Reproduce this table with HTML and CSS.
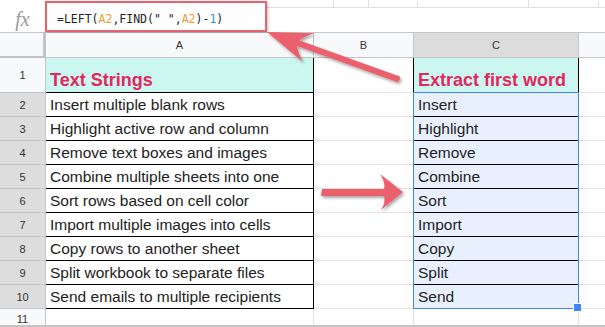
FILE: index.html
```html
<!DOCTYPE html>
<html>
<head>
<meta charset="utf-8">
<link rel="stylesheet" href="styles.css">
</head>
<body>
<div class="page">
  <div class="formula-row">
    <div class="fx">fx</div>
    <div class="formula">=LEFT(<span class="ref">A2</span>,FIND(" ",<span class="ref">A2</span>)-<span class="num">1</span>)</div>
  </div>
  <div class="sheet">
    <div class="corner"></div>
    <div class="colhead">A</div>
    <div class="colhead">B</div>
    <div class="colhead sel">C</div>
    <div class="colhead last"></div>

    <div class="rowhead">1</div>
    <div class="cell a title">Text Strings</div>
    <div class="cell b b1"></div>
    <div class="cell c title">Extract first word</div>
    <div class="cell d"></div>

    <div class="rowhead sel">2</div>
    <div class="cell a">Insert multiple blank rows</div>
    <div class="cell b"></div>
    <div class="cell c picked">Insert</div>
    <div class="cell d"></div>

    <div class="rowhead sel">3</div>
    <div class="cell a">Highlight active row and column</div>
    <div class="cell b"></div>
    <div class="cell c picked">Highlight</div>
    <div class="cell d"></div>

    <div class="rowhead sel">4</div>
    <div class="cell a">Remove text boxes and images</div>
    <div class="cell b"></div>
    <div class="cell c picked">Remove</div>
    <div class="cell d"></div>

    <div class="rowhead sel">5</div>
    <div class="cell a">Combine multiple sheets into one</div>
    <div class="cell b"></div>
    <div class="cell c picked">Combine</div>
    <div class="cell d"></div>

    <div class="rowhead sel">6</div>
    <div class="cell a">Sort rows based on cell color</div>
    <div class="cell b"></div>
    <div class="cell c picked">Sort</div>
    <div class="cell d"></div>

    <div class="rowhead sel">7</div>
    <div class="cell a">Import multiple images into cells</div>
    <div class="cell b"></div>
    <div class="cell c picked">Import</div>
    <div class="cell d"></div>

    <div class="rowhead sel">8</div>
    <div class="cell a">Copy rows to another sheet</div>
    <div class="cell b"></div>
    <div class="cell c picked">Copy</div>
    <div class="cell d"></div>

    <div class="rowhead sel">9</div>
    <div class="cell a">Split workbook to separate files</div>
    <div class="cell b"></div>
    <div class="cell c picked">Split</div>
    <div class="cell d"></div>

    <div class="rowhead sel">10</div>
    <div class="cell a">Send emails to multiple recipients</div>
    <div class="cell b"></div>
    <div class="cell c picked">Send</div>
    <div class="cell d"></div>

    <div class="rowhead small">11</div>
    <div class="cell plain"></div>
    <div class="cell plain"></div>
    <div class="cell plain"></div>
    <div class="cell plain last"></div>

    <div class="selection"></div>
  </div>
  <div class="scrollbar"></div>

  <svg class="arrows" width="605" height="327" viewBox="0 0 605 327" xmlns="http://www.w3.org/2000/svg">
    <defs>
      <filter id="sh" x="-20%" y="-40%" width="140%" height="180%">
        <feDropShadow dx="1.5" dy="2" stdDeviation="1.6" flood-color="#000" flood-opacity="0.35"/>
      </filter>
    </defs>
    <g filter="url(#sh)" fill="#ea606d">
      <path transform="translate(267 32) rotate(19.8)" d="M0,0 L45,-15 Q36,-8 33,-3 L140,-3 Q142,0 140,3 L33,3 Q36,9 44,16 Z"/>
      <path d="M403,192 L380,174 Q386,183 384,189 L322,189 L321,196 L384,196 Q386,202 381,210 Z"/>
    </g>
  </svg>
</div>
</body>
</html>
```

FILE: styles.css
```css
* { box-sizing: border-box; }

html, body {
  margin: 0;
  padding: 0;
  background: #ffffff;
}

.page {
  position: relative;
  width: 605px;
  height: 327px;
  overflow: hidden;
  font-family: "Liberation Sans", Arial, sans-serif;
  color: #222;
}

.formula-row {
  display: flex;
  align-items: flex-start;
  height: 33px;
  border-bottom: 1px solid #c6c6c6;
  background:
    linear-gradient(#e0e0e0, #e0e0e0) 45px 7px / 560px 1px no-repeat,
    linear-gradient(#e0e0e0, #e0e0e0) 182px 0 / 1px 7px no-repeat,
    linear-gradient(#e0e0e0, #e0e0e0) 251px 0 / 1px 7px no-repeat,
    linear-gradient(#e0e0e0, #e0e0e0) 333px 0 / 1px 7px no-repeat,
    linear-gradient(#e0e0e0, #e0e0e0) 368px 0 / 1px 7px no-repeat,
    linear-gradient(#e0e0e0, #e0e0e0) 417px 0 / 1px 7px no-repeat,
    linear-gradient(#e0e0e0, #e0e0e0) 528px 0 / 1px 7px no-repeat,
    linear-gradient(#e0e0e0, #e0e0e0) 598px 0 / 1px 7px no-repeat,
    #ffffff;
}

.fx {
  width: 45px;
  padding-top: 8px;
  text-align: center;
  font-family: "Liberation Serif", "Times New Roman", serif;
  font-style: italic;
  font-size: 20px;
  line-height: 22px;
  color: #9a9a9a;
}

.formula {
  width: 222px;
  height: 31px;
  margin-top: 1px;
  border: 2px solid #e5626e;
  background: #ffffff;
  box-shadow: 1px 1px 3px rgba(0, 0, 0, 0.25);
  padding: 8px 0 0 10px;
  font-family: "DejaVu Sans Mono", "Liberation Mono", monospace;
  font-size: 11.5px;
  line-height: 16px;
  color: #222;
  white-space: pre;
}

.formula .ref { color: #f39c33; }
.formula .num { color: #3a8ddb; }

.sheet {
  position: relative;
  display: grid;
  grid-template-columns: 46px 268px 100px 165px 26px;
  grid-template-rows: 25px 35px repeat(9, 24px) 16px;
}

.corner {
  background: #f8f9fa;
  border-right: 3px solid #c4c4c4;
  border-bottom: 3px solid #c4c4c4;
  margin-bottom: -1px;
}

.colhead {
  display: flex;
  align-items: center;
  justify-content: center;
  background: #f8f9fa;
  border-right: 1px solid #c6c6c6;
  border-bottom: 1px solid #c6c6c6;
  font-size: 11px;
  color: #333;
}

.colhead.sel { background: #dcdcdc; }
.colhead.last { border-right: none; }

.rowhead {
  display: flex;
  align-items: center;
  justify-content: center;
  background: #f8f9fa;
  border-right: 1px solid #c6c6c6;
  border-bottom: 1px solid #c6c6c6;
  font-size: 11px;
  color: #333;
}

.rowhead.sel { background: #dddddd; }
.rowhead.small { border-bottom: none; align-items: flex-end; }

.cell {
  display: flex;
  align-items: flex-end;
  padding: 0 4px 2px 4px;
  font-size: 15.5px;
  line-height: 18px;
  white-space: nowrap;
  overflow: hidden;
}

.cell.a {
  border-right: 1px solid #000;
  border-bottom: 1px solid #000;
}

.cell.b {
  border-right: 1px solid #e2e2e2;
  border-bottom: 1px solid #e2e2e2;
}

.cell.b1 { border-right-color: #000; }

.cell.c {
  border-right: 1px solid #000;
  border-bottom: 1px solid #000;
}

.cell.d { border-bottom: 1px solid #e2e2e2; }

.cell.plain { border-right: 1px solid #e2e2e2; }
.cell.plain.last { border-right: none; }

.cell.title {
  background: #ccf7f1;
  color: #e0285f;
  font-weight: bold;
  font-size: 18px;
  line-height: 21px;
  padding-bottom: 1.5px;
}

.cell.picked { background: #e8f0fe; }

.selection {
  position: absolute;
  grid-column: 4 / 5;
  grid-row: 3 / 12;
  top: -1px;
  left: -1px;
  right: 0;
  bottom: 0;
  border: 1px solid #4285f4;
  pointer-events: none;
}

.selection::after {
  content: "";
  position: absolute;
  right: -4px;
  bottom: -4px;
  width: 7px;
  height: 7px;
  background: #4285f4;
  border: 1px solid #ffffff;
}

.scrollbar {
  height: 2px;
  background: #c4c4c4;
}

.arrows {
  position: absolute;
  top: 0;
  left: 0;
}
```
